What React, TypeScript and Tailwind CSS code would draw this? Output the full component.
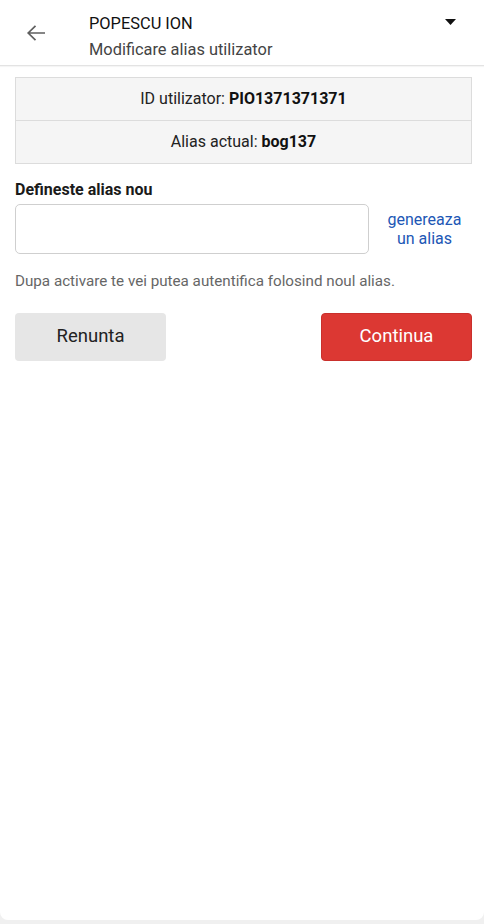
import React from "react";

export default function App() {
  return (
    <div
      className="h-[924px] w-[484px] bg-[#f0f0f0]"
      style={{ fontFamily: "Roboto, 'Noto Sans', Arial, sans-serif" }}
    >
      <div className="flex h-[920px] flex-col rounded-b-[8px] bg-white">
        {/* Header */}
        <div className="flex h-[66px] shrink-0 border-b border-[#e3e3e3] shadow-[0_1px_1px_rgba(0,0,0,0.04)]">
          <div className="flex w-[89px] shrink-0 items-start pl-[24px] pt-[21px]">
            <svg width="24" height="24" viewBox="0 0 24 24" fill="none">
              <path
                d="M21 12H4.5M11.5 4.8L4.2 12l7.3 7.2"
                stroke="#5f5f5f"
                strokeWidth="1.7"
                strokeLinecap="butt"
                strokeLinejoin="miter"
              />
            </svg>
          </div>
          <div className="flex flex-1 flex-col pt-[14px]">
            <div className="text-[16.4px] leading-[20px] text-[#111]">POPESCU ION</div>
            <div className="mt-[6px] text-[16.4px] leading-[20px] text-[#444]">
              Modificare alias utilizator
            </div>
          </div>
          <div className="flex w-[50px] shrink-0 items-start pl-[11px] pt-[19px]">
            <svg width="11" height="6" viewBox="0 0 11 6">
              <path d="M0 0h11L5.5 6z" fill="#111" />
            </svg>
          </div>
        </div>

        {/* Content */}
        <div className="flex flex-col pl-[15px] pr-[12px] pt-[11px]">
          <div className="flex flex-col border border-[#dcdcdc] bg-[#f5f5f5] text-[16px] text-[#222]">
            <div className="flex h-[43px] items-center justify-center border-b border-[#dcdcdc]">
              <span>
                ID utilizator: <span className="font-bold text-[#111]">PIO1371371371</span>
              </span>
            </div>
            <div className="flex h-[42px] items-center justify-center">
              <span>
                Alias actual: <span className="font-bold text-[#111]">bog137</span>
              </span>
            </div>
          </div>

          <div className="mt-[16px] text-[16px] font-bold leading-[20px] text-[#1a1a1a]">
            Defineste alias nou
          </div>

          <div className="mt-[4px] flex items-center">
            <input
              type="text"
              className="h-[50px] w-[354px] shrink-0 rounded-[5px] border border-[#cfcfcf] bg-white px-3 text-[16px] outline-none"
            />
            <div className="flex flex-1 justify-center pl-[8px] text-center text-[16px] leading-[19px] text-[#2157b5]">
              genereaza
              <br />
              un alias
            </div>
          </div>

          <div className="mt-[17px] text-[15.2px] leading-[20px] text-[#666]">
            Dupa activare te vei putea autentifica folosind noul alias.
          </div>

          <div className="mt-[22px] flex justify-between">
            <button className="flex h-[48px] w-[151px] items-center justify-center rounded-[4px] bg-[#e6e6e6] text-[18.5px] text-[#222]">
              Renunta
            </button>
            <button className="flex h-[48px] w-[151px] items-center justify-center rounded-[4px] border border-[#c9302c] bg-[#dc3833] text-[18.5px] text-white">
              Continua
            </button>
          </div>
        </div>
      </div>
    </div>
  );
}
